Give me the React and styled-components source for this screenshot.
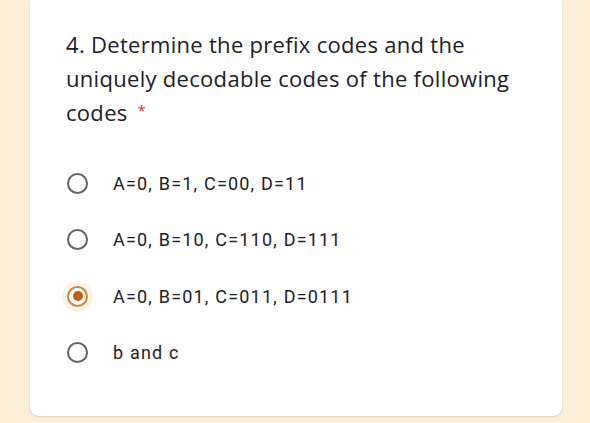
import React from "react";
import styled, { createGlobalStyle } from "styled-components";

const GlobalStyle = createGlobalStyle`
  html, body {
    margin: 0;
    padding: 0;
    background: #fbf0d7;
  }
  body {
    font-family: "Open Sans", Roboto, "Liberation Sans", Arial, sans-serif;
    color: #202124;
  }
`;

const Page = styled.div`
  width: 590px;
  height: 423px;
  overflow: hidden;
  background: #fbf0d7;
`;

const Card = styled.div`
  width: 532px;
  margin-left: 30px;
  box-sizing: border-box;
  padding: 27px 36px 35px 36px;
  background: #fff;
  border-radius: 0 0 9px 9px;
  box-shadow: 0 1px 2px rgba(120, 110, 90, 0.25);
`;

const Question = styled.div`
  font-size: 22px;
  line-height: 34px;
  letter-spacing: 0.3px;
  color: #202124;
`;

const Required = styled.span`
  color: #d93025;
  font-size: 15px;
  vertical-align: top;
  margin-left: 10px;
  position: relative;
  top: -2px;
`;

const Options = styled.div`
  margin-top: 26px;
  display: flex;
  flex-direction: column;
`;

const Option = styled.div`
  display: flex;
  align-items: center;
  height: 56.5px;
`;

const Radio = styled.span`
  position: relative;
  width: 21px;
  height: 21px;
  box-sizing: border-box;
  border-radius: 50%;
  border: 2.5px solid ${(p) => (p.checked ? "#c9873a" : "#5f6368")};
  margin-left: 1px;
  margin-right: 25px;
  flex-shrink: 0;
  box-shadow: ${(p) => (p.checked ? "0 0 0 5px #fcf3e6" : "none")};
  &::after {
    content: "";
    display: ${(p) => (p.checked ? "block" : "none")};
    position: absolute;
    left: 50%;
    top: 50%;
    width: 10px;
    height: 10px;
    margin: -5px 0 0 -5px;
    border-radius: 50%;
    background: #c0600f;
  }
`;

const Label = styled.span`
  font-family: Roboto, "Liberation Sans", Arial, sans-serif;
  font-size: 18px;
  letter-spacing: 1.2px;
  color: #202124;
`;

const options = [
  "A=0, B=1, C=00, D=11",
  "A=0, B=10, C=110, D=111",
  "A=0, B=01, C=011, D=0111",
  "b and c",
];

export default function App() {
  return (
    <Page>
      <GlobalStyle />
      <Card>
        <Question>
          4. Determine the prefix codes and the uniquely decodable codes of the
          following codes<Required>*</Required>
        </Question>
        <Options>
          {options.map((o, i) => (
            <Option key={o}>
              <Radio checked={i === 2} />
              <Label>{o}</Label>
            </Option>
          ))}
        </Options>
      </Card>
    </Page>
  );
}
